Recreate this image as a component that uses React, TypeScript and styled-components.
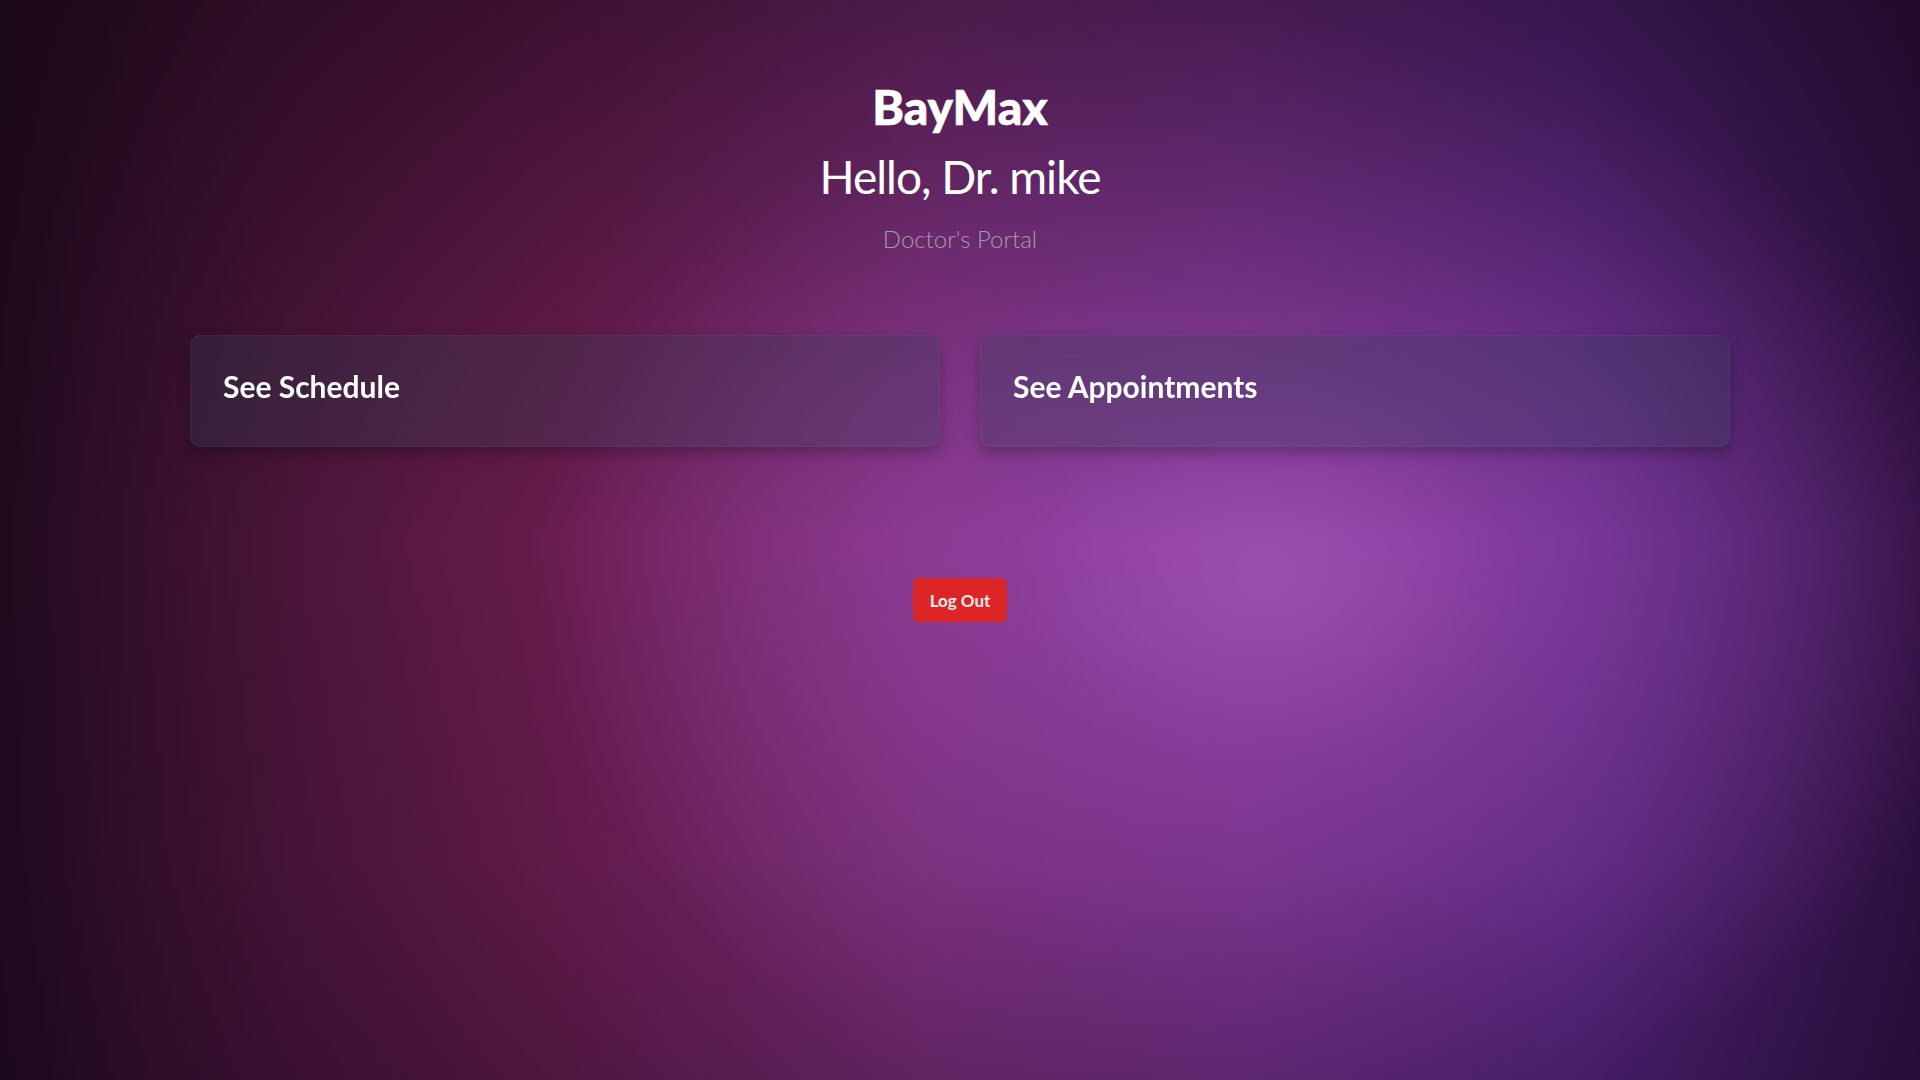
import React from "react";
import styled, { createGlobalStyle } from "styled-components";

const GlobalStyle = createGlobalStyle`
  html, body {
    margin: 0;
    padding: 0;
  }
  body {
    font-family: Lato, "Open Sans", "Liberation Sans", sans-serif;
    color: #fff;
  }
  * {
    box-sizing: border-box;
  }
`;

const Page = styled.div`
  min-height: 100vh;
  display: flex;
  flex-direction: column;
  align-items: center;
  padding: 83px 190px 0;
  background:
    radial-gradient(ellipse 38% 52% at 66% 54%, rgba(160, 80, 180, 0.95) 0%, rgba(150, 70, 170, 0.6) 35%, rgba(130, 55, 150, 0) 100%),
    linear-gradient(to right, #200a1e 0%, #4a1538 15%, #6a1d4f 30%, #82307d 48%, #7a3290 65%, #5a2888 82%, #2e1040 100%);
  position: relative;
  overflow: hidden;

  &::before {
    content: "";
    position: absolute;
    inset: 0;
    background: linear-gradient(to bottom, rgba(20, 5, 20, 0.5) 0%, rgba(20, 5, 20, 0.15) 30%, rgba(20, 5, 20, 0) 50%, rgba(20, 5, 30, 0.1) 80%, rgba(20, 5, 30, 0.3) 100%);
    pointer-events: none;
  }

  & > * {
    position: relative;
  }
`;

const Header = styled.header`
  display: flex;
  flex-direction: column;
  align-items: center;
  text-align: center;
`;

const Brand = styled.h1`
  margin: 0;
  font-size: 48px;
  line-height: 48px;
  font-weight: 900;
  -webkit-text-stroke: 0.6px #fff;
`;

const Greeting = styled.h2`
  margin: 22px 0 0;
  font-size: 46px;
  line-height: 48px;
  font-weight: 400;
  letter-spacing: -1px;
`;

const Subtitle = styled.p`
  margin: 22px 0 0;
  font-size: 24px;
  line-height: 32px;
  font-weight: 300;
  color: #a59aae;
`;

const CardGrid = styled.div`
  width: 100%;
  display: grid;
  grid-template-columns: 1fr 1fr;
  gap: 40px;
  margin-top: 80px;
`;

const Card = styled.div`
  cursor: pointer;
  height: 112px;
  padding: 32px;
  border-radius: 10px;
  background: rgba(51, 65, 85, 0.3);
  border: 1px solid rgba(255, 255, 255, 0.04);
  box-shadow: 0 6px 14px rgba(0, 0, 0, 0.25);
  backdrop-filter: blur(12px);
`;

const CardTitle = styled.h3`
  margin: 0;
  font-size: 30px;
  line-height: 36px;
  font-weight: 700;
  color: #fff;
`;

const LogOutButton = styled.button`
  margin-top: 131px;
  height: 44px;
  padding: 0 17px;
  border: none;
  border-radius: 6px;
  background: #dc2626;
  color: #ececec;
  font-family: inherit;
  font-size: 17px;
  font-weight: 700;
  cursor: pointer;
`;

const cards = ["See Schedule", "See Appointments"];

export default function App() {
  return (
    <>
      <GlobalStyle />
      <Page>
        <Header>
          <Brand>BayMax</Brand>
          <Greeting>Hello, Dr. mike</Greeting>
          <Subtitle>Doctor's Portal</Subtitle>
        </Header>
        <CardGrid>
          {cards.map((title) => (
            <Card key={title} role="button">
              <CardTitle>{title}</CardTitle>
            </Card>
          ))}
        </CardGrid>
        <LogOutButton>Log Out</LogOutButton>
      </Page>
    </>
  );
}
